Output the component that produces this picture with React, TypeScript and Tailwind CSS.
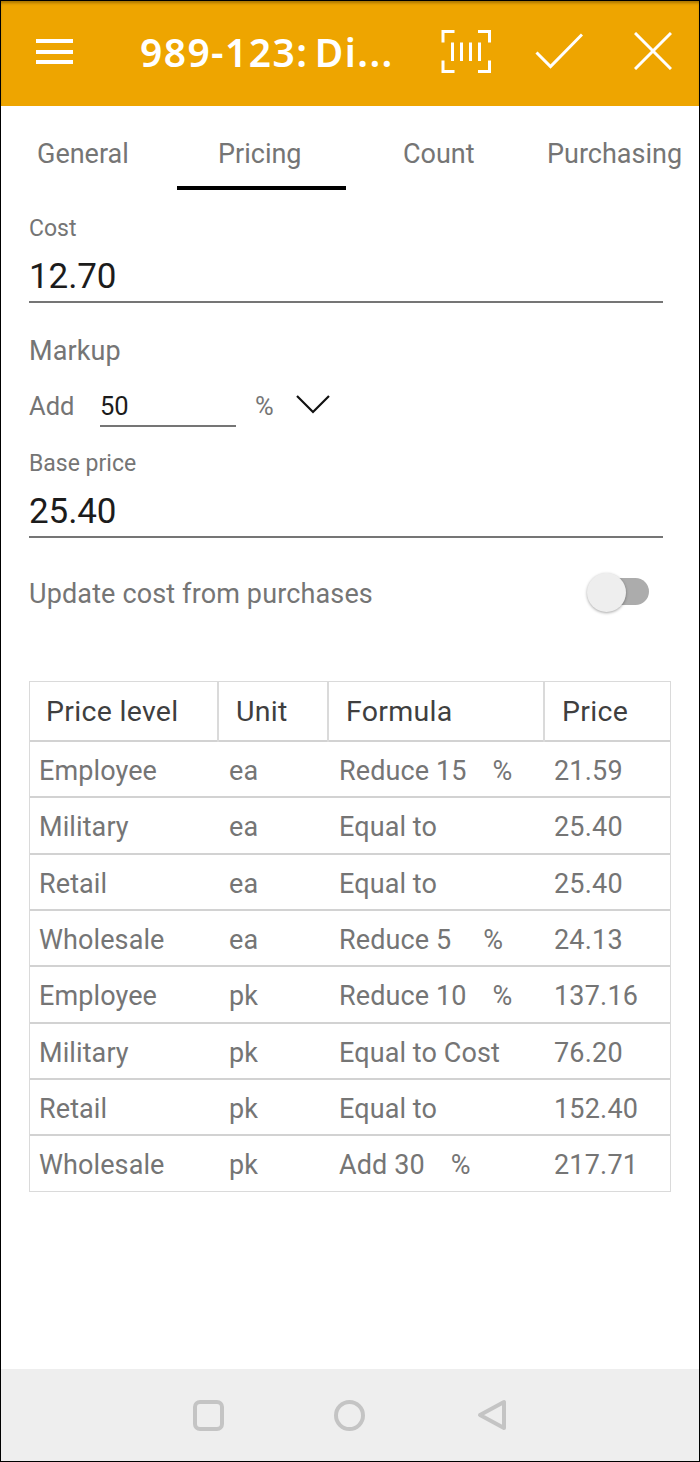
const tabs = [
  { label: 'General', className: 'w-[176px] pl-9' },
  { label: 'Pricing', className: 'w-[169px] border-b-4 border-black pl-[41px]' },
  { label: 'Count', className: 'w-[183px] pl-[57px]' },
  { label: 'Purchasing', className: 'w-[169px] pl-[18px]' },
];

const prices = [
  { level: 'Employee', unit: 'ea', formula: 'Reduce 15', percent: true, price: '21.59' },
  { level: 'Military', unit: 'ea', formula: 'Equal to', percent: false, price: '25.40' },
  { level: 'Retail', unit: 'ea', formula: 'Equal to', percent: false, price: '25.40' },
  { level: 'Wholesale', unit: 'ea', formula: 'Reduce 5', percent: true, wide: true, price: '24.13' },
  { level: 'Employee', unit: 'pk', formula: 'Reduce 10', percent: true, price: '137.16' },
  { level: 'Military', unit: 'pk', formula: 'Equal to Cost', percent: false, price: '76.20' },
  { level: 'Retail', unit: 'pk', formula: 'Equal to', percent: false, price: '152.40' },
  { level: 'Wholesale', unit: 'pk', formula: 'Add 30', percent: true, price: '217.71' },
];

const Header = () => (
  <header className="flex h-[105px] shrink-0 items-center bg-[#eea500] pb-1 text-white shadow-[inset_0_3px_3px_-1px_#a87400]">
    <button className="ml-[35px] flex w-[37px] flex-col gap-[6.500px]" aria-label="Menu">
      <span className="h-1 w-full bg-white" />
      <span className="h-1 w-full bg-white" />
      <span className="h-1 w-full bg-white" />
    </button>
    <h1 className="ml-[67px] w-[260px] font-['Noto_Sans',sans-serif] text-[39px] leading-[52px] font-semibold tracking-[1.400px] whitespace-nowrap [word-spacing:-5px]">
      989-123: Di...
    </h1>
    <svg className="ml-[41px] h-[43px] w-[50px]" viewBox="0 0 50 43" fill="none" stroke="currentColor" strokeWidth="3">
      <path d="M2 12.500V1.500H13.500M37 1.500h11.500V12.500M48.500 30.500v11h-11.500M13.500 41.500H2V30.500" />
      <path d="M11.500 12.500v18.500M20.500 12.500v18.500M29.500 12.500v18.500M38.500 12.500v18.500" />
    </svg>
    <svg className="mb-px ml-11 h-9 w-12" viewBox="0 0 48 36" fill="none" stroke="currentColor" strokeWidth="3">
      <path d="M1.500 19.500L15.500 33.500L47 1.500" />
    </svg>
    <svg className="mb-px ml-[51px] h-[38px] w-[38px]" viewBox="0 0 38 38" fill="none" stroke="currentColor" strokeWidth="3">
      <path d="M1 1L37 37M37 1L1 37" />
    </svg>
  </header>
);

const Field = ({ label, value }: { label: string; value: string }) => (
  <div className="mr-2 border-b-2 border-[#757575]">
    <div className="h-8 text-[23px] leading-[34px] text-[#757575]">{label}</div>
    <div className="h-[57px] pt-1 text-[35px] leading-[58px] tracking-[-0.1px] text-[#1c1c1c]">{value}</div>
  </div>
);

const PriceTable = () => (
  <div className="mt-[65px] w-[642px] border border-[#dadada] text-[27px] tracking-[0.1px]">
    <div className="grid h-[60px] grid-cols-[189px_110px_216px_1fr] border-b-2 border-[#d2d2d2] text-[28.500px] leading-[60px] tracking-[0.3px] text-[#3f3f3f]">
      <div className="border-r-2 border-[#dadada] pl-4">Price level</div>
      <div className="border-r-2 border-[#dadada] pl-[17px]">Unit</div>
      <div className="border-r-2 border-[#dadada] pl-[17px]">Formula</div>
      <div className="pl-[17px]">Price</div>
    </div>
    {prices.map((row, index) => (
      <div
        key={index}
        className="grid h-[56.330px] grid-cols-[189px_110px_216px_1fr] border-b-2 border-[#d2d2d2] leading-[59px] text-[#757575] last:h-[55px] last:border-b-0"
      >
        <div className="pl-[9px]">{row.level}</div>
        <div className="pl-2.5">{row.unit}</div>
        <div className="flex pl-2.5">
          {row.formula}
          {row.percent && <span className={row.wide ? 'ml-[32px]' : 'ml-[26px]'}>%</span>}
        </div>
        <div className="pl-[9px] tracking-[0.2px]">{row.price}</div>
      </div>
    ))}
  </div>
);

const App = () => {
  return (
    <div className="flex h-[1462px] w-[700px] flex-col overflow-hidden border border-black bg-white font-['Roboto',sans-serif]">
      <Header />

      <nav className="flex h-[84px] shrink-0 text-[27px] leading-[97px] text-[#757575]">
        {tabs.map((tab) => (
          <div key={tab.label} className={`h-full shrink-0 ${tab.className}`}>
            {tab.label}
          </div>
        ))}
      </nav>

      <main className="flex-1 px-7 pt-[22px]">
        <Field label="Cost" value="12.70" />

        <div className="mt-8 text-[27px] leading-8 tracking-[0.1px] text-[#757575]">Markup</div>
        <div className="mt-4 flex h-[44px] text-[25.500px] leading-[46px] text-[#757575]">
          <span className="w-[71px]">Add</span>
          <span className="w-[136px] border-b-2 border-[#757575] text-[#1c1c1c]">50</span>
          <span className="ml-[19px] w-10">%</span>
          <svg className="mt-3 ml-px h-5 w-[34px]" viewBox="0 0 34 20" fill="none" stroke="#111" strokeWidth="2.200">
            <path d="M1 1L17 17L33 1" />
          </svg>
        </div>

        <div className="mt-5">
          <Field label="Base price" value="25.40" />
        </div>

        <div className="mt-8 flex h-[46px] items-center justify-between pr-[22px]">
          <span className="pt-0.5 text-[27px] tracking-[0.140px] text-[#757575]">Update cost from purchases</span>
          <button role="switch" aria-checked="false" aria-label="Update cost from purchases" className="mb-0.5 flex h-10 w-[62px] items-center">
            <span className="z-10 h-[39px] w-[39px] shrink-0 rounded-full bg-[#eeeeee] shadow-[0_1px_3px_rgba(0,0,0,0.35)]" />
            <span className="mb-px -ml-[26px] h-[27px] w-[49px] shrink-0 rounded-full bg-[#acacac]" />
          </button>
        </div>

        <PriceTable />
      </main>

      <footer className="flex h-[92px] shrink-0 items-center bg-[#eeeeee] pl-[192px]">
        <span className="h-[31px] w-[31px] rounded-[7px] border-4 border-[#c4c4c4]" />
        <span className="ml-[110px] h-[31px] w-[31px] rounded-full border-4 border-[#c4c4c4]" />
        <svg className="ml-[112px] h-8 w-[30px]" viewBox="0 0 30 32" fill="none" stroke="#c4c4c4" strokeWidth="4" strokeLinejoin="round">
          <path d="M3 16L27 3V29Z" />
        </svg>
      </footer>
    </div>
  );
};

export default App;
